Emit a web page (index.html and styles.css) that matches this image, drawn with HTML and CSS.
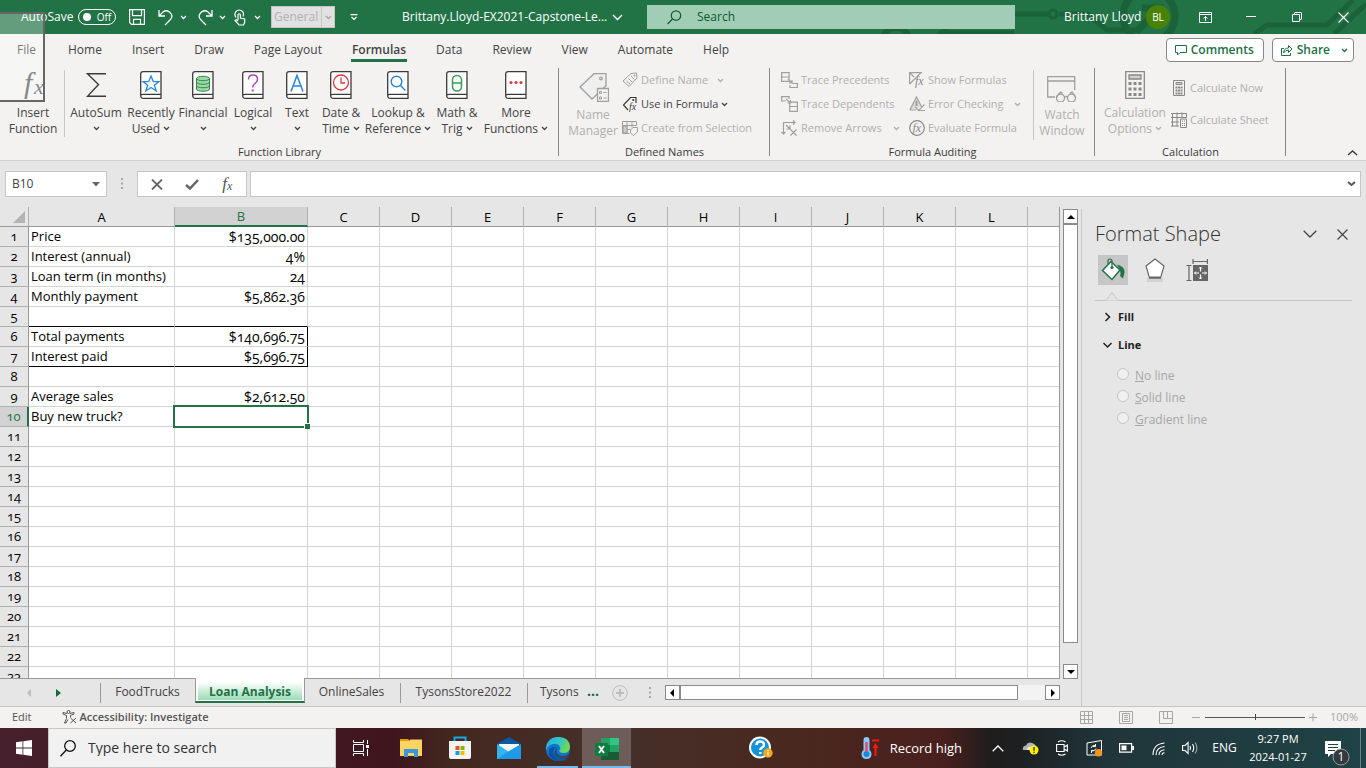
FILE: index.html
```html
<!DOCTYPE html>
<html lang="en">
<head>
<meta charset="utf-8">
<title>Workbook</title>
<link rel="stylesheet" href="styles.css">
</head>
<body>
<svg class="defs" aria-hidden="true">
  <symbol id="chev" viewBox="0 0 7 5"><path d="M1 1l2.500 2.500L6 1" fill="none" stroke="currentColor" stroke-width="1.300"/></symbol>
  <symbol id="book" viewBox="0 0 22 28"><path d="M.7 24V3.200Q.7.700 3.200.700H21V27.300H3.500Q.7 27.300.7 24.500Q.7 23.300 3 23.300H21" fill="#fff" stroke="#3b3a39" stroke-width="1.300"/></symbol>
</svg>

<header class="titlebar">
  <svg class="circuit" width="512" height="34" viewBox="0 0 512 34" fill="none" stroke="#1c6239" stroke-width="5" aria-hidden="true">
    <path d="M161 14h36M205 14h28l20 16h30"/><circle cx="199" cy="14" r="4" stroke-width="3"/>
    <circle cx="295" cy="16" r="26" stroke-width="7"/><path d="M282 32l22-22M288 8h18v18" stroke-width="7"/>
    <path d="M400 34l13-9h60l26-25M480 34l32-30M90 33h70"/><circle cx="42" cy="42" r="14" stroke-width="6"/><path d="M85 34q5-5 12 0"/>
  </svg>
  <div class="quick">
    <span class="autosave">AutoSave</span>
    <button class="toggle"><i></i>Off</button>
    <button class="q-save" aria-label="Save"><svg width="16" height="16" viewBox="0 0 16 16" fill="none" stroke="#fff" stroke-width="1.200"><path d="M.6.6h14.800v14.800H2.500L.6 13.500zM3.500.6v6h9v-6M4.500 15.400v-5h7v5"/></svg></button>
    <button class="q-undo" aria-label="Undo"><svg width="15" height="17" viewBox="0 0 15 17" fill="none" stroke="#fff" stroke-width="1.300"><path d="M1 1v6h6M1 7l4-4q3-2.500 6.500 0Q16 7 12 11l-5 5"/></svg><svg class="ch"><use href="#chev"/></svg></button>
    <button class="q-redo" aria-label="Redo"><svg width="15" height="17" viewBox="0 0 15 17" fill="none" stroke="#fff" stroke-width="1.300"><path d="M14 1v6H8M14 7l-4-4Q7 .5 3.500 3-1 7 3 11l5 5"/></svg><svg class="ch"><use href="#chev"/></svg></button>
    <button class="q-touch" aria-label="Touch mode"><svg width="12" height="17" viewBox="0 0 12 17" fill="none" stroke="#fff" stroke-width="1.200"><path d="M4 11V5.500q1.200-1.500 2.400 0V9l4.300 1v3.500L9.500 16H5l-4-4.500q1-1.500 3 .5M2 8.500Q0 6 1.600 3 5 -1 9 3q1 2 0 4.500"/></svg><svg class="ch"><use href="#chev"/></svg></button>
    <span class="combo"><select disabled aria-label="Number format"><option>General</option></select><span><svg class="ch"><use href="#chev"/></svg></span></span>
    <button class="q-more" aria-label="Customize toolbar"><svg width="8" height="7" viewBox="0 0 8 7" fill="none" stroke="#fff" stroke-width="1.200"><path d="M.5.700h7M1.500 3L4 5.500 6.500 3"/></svg></button>
  </div>
  <button class="doc">Brittany.Lloyd-EX2021-Capstone-Le...<svg width="11" height="7" viewBox="0 0 11 7" fill="none" stroke="#fff" stroke-width="1.400"><path d="M1 1l4.500 4.500L10 1"/></svg></button>
  <label class="find"><svg width="15" height="15" viewBox="0 0 15 15" fill="none" stroke="#0f5a30" stroke-width="1.200"><circle cx="9" cy="5.500" r="4.700"/><path d="M5.500 9L.6 14"/></svg><input type="text" placeholder="Search" aria-label="Search"></label>
  <div class="account">
    <span class="user">Brittany Lloyd</span><span class="avatar">BL</span>
    <button aria-label="Ribbon display"><svg width="13" height="11" viewBox="0 0 13 11" fill="none" stroke="#fff"><path d="M.5.5h12v10H.5zM.5 2.500h12M6.500 9V4.500M4.500 6.500l2-2 2 2"/></svg></button>
    <button aria-label="Minimize"><svg width="10" height="10" viewBox="0 0 10 10" stroke="#fff"><path d="M0 4.500h10"/></svg></button>
    <button aria-label="Restore"><svg width="10" height="10" viewBox="0 0 10 10" fill="none" stroke="#fff"><path d="M.5 2.500h7v7h-7zM2.500 2.500v-1.500q0-.5.5-.5h6q.5 0 .5.500v6q0 .5-.5.500H7.500"/></svg></button>
    <button aria-label="Close"><svg width="11" height="11" viewBox="0 0 11 11" stroke="#fff" stroke-width="1.200"><path d="M.5.5l10 10M10.500.5l-10 10"/></svg></button>
  </div>
</header>

<nav class="tabs">
  <button>File</button><button>Home</button><button>Insert</button><button>Draw</button><button>Page Layout</button><button class="on">Formulas</button><button>Data</button><button>Review</button><button>View</button><button>Automate</button><button>Help</button>
  <div class="share">
    <button><svg width="12" height="11" viewBox="0 0 12 11" fill="none" stroke="#1e7145"><path d="M.5.5h11v7H5l-2.500 2.500V7.500H.5z"/></svg>Comments</button>
    <button><svg width="12" height="12" viewBox="0 0 12 12" fill="none" stroke="#1e7145"><path d="M3 4.500H.5v7h9V9M2.500 9q.5-5 5-5V1.500L11 5 7.500 8.500V6Q4.500 6 2.500 9z"/></svg>Share<svg class="ch"><use href="#chev"/></svg></button>
  </div>
</nav>

<section class="ribbon">
  <div class="group lib">
    <div class="big-row">
      <button class="big first"><svg width="28" height="30" viewBox="0 0 28 30"><text x="5" y="23" class="fx-big">f</text><text x="15" y="24" class="fx-x">x</text></svg>Insert<br>Function</button>
      <button class="big"><svg width="20" height="30" viewBox="0 0 20 30" fill="none" stroke="#3b3a39" stroke-width="1.400"><path d="M20 3.700H1.500L12.500 14.500 1.500 26.300H20"/></svg>AutoSum<br><svg class="ch"><use href="#chev"/></svg></button>
      <button class="big"><svg width="22" height="30" viewBox="0 0 22 30" fill="none"><use href="#book" y="1" width="22" height="28"/><path d="M11 6l2.300 5.600H19l-4.600 3.600 1.800 5.800-5.200-3.500L5.800 21l1.800-5.800L3 11.600h5.700z" stroke="#2b88d8" stroke-width="1.300"/></svg>Recently<br>Used <svg class="ch"><use href="#chev"/></svg></button>
      <button class="big"><svg width="22" height="30" viewBox="0 0 22 30" fill="#9fd8a8" stroke="#2f8a45"><use href="#book" y="1" width="22" height="28"/><path d="M4.500 8.500v10.500c0 3 13 3 13 0V8.500"/><ellipse cx="11" cy="8.500" rx="6.500" ry="2.200"/><path d="M4.500 12c0 3 13 3 13 0M4.500 15.500c0 3 13 3 13 0" fill="none"/></svg>Financial<br><svg class="ch"><use href="#chev"/></svg></button>
      <button class="big"><svg width="22" height="30" viewBox="0 0 22 30" fill="none" stroke="#a846b8" stroke-width="1.500"><use href="#book" y="1" width="22" height="28"/><path d="M6.500 9.500q0-4.500 4.500-4.500t4.500 4.500q0 2-2.500 4t-2.300 4"/><path d="M9.700 20.500h2" stroke-width="2"/></svg>Logical<br><svg class="ch"><use href="#chev"/></svg></button>
      <button class="big"><svg width="22" height="30" viewBox="0 0 22 30" fill="none" stroke="#2b88d8" stroke-width="1.600"><use href="#book" y="1" width="22" height="28"/><path d="M5 21.500L11 5.500l6 16M7.200 16h7.600"/></svg>Text<br><svg class="ch"><use href="#chev"/></svg></button>
      <button class="big"><svg width="22" height="30" viewBox="0 0 22 30" fill="none" stroke="#e8373b" stroke-width="1.300"><use href="#book" y="1" width="22" height="28"/><circle cx="11" cy="12.500" r="7.500"/><path d="M11 7.500v5.500h4"/></svg>Date &amp;<br>Time <svg class="ch"><use href="#chev"/></svg></button>
      <button class="big"><svg width="22" height="30" viewBox="0 0 22 30" fill="none" stroke="#2b88d8" stroke-width="1.500"><use href="#book" y="1" width="22" height="28"/><circle cx="9.500" cy="11.500" r="5.300"/><path d="M13.300 15.300l5 5.200"/></svg>Lookup &amp;<br>Reference <svg class="ch"><use href="#chev"/></svg></button>
      <button class="big"><svg width="22" height="30" viewBox="0 0 22 30" fill="none" stroke="#33a04f" stroke-width="1.500"><use href="#book" y="1" width="22" height="28"/><rect x="6.500" y="5.500" width="9" height="15.500" rx="4.500"/><path d="M6.500 13h9"/></svg>Math &amp;<br>Trig <svg class="ch"><use href="#chev"/></svg></button>
      <button class="big"><svg width="22" height="30" viewBox="0 0 22 30" fill="#e8373b"><use href="#book" y="1" width="22" height="28"/><circle cx="6" cy="12.500" r="1.600"/><circle cx="11" cy="12.500" r="1.600"/><circle cx="16" cy="12.500" r="1.600"/></svg>More<br>Functions <svg class="ch"><use href="#chev"/></svg></button>
    </div>
    <h2>Function Library</h2>
  </div>

  <div class="group names">
    <div class="cols">
      <button class="big off" disabled><svg width="32" height="30" viewBox="0 0 32 30" fill="none" stroke="#a19f9d" stroke-width="1.300"><path d="M17 1.700h12v12L15 27 3 15z" fill="#efefef"/><circle cx="24" cy="6.500" r="1.300"/><path d="M20.500 16.500h11v13h-11z" fill="#f3f2f1"/><path d="M22.500 19.500h2v2h-2zM22.500 25h2v2h-2zM26.500 20.500h3M26.500 26h3" stroke-width="1"/></svg>Name<br>Manager</button>
      <div class="stack">
        <button class="small off" disabled><svg width="16" height="16" viewBox="0 0 16 16" fill="none" stroke="#a19f9d"><path d="M9 1.500l5.500-.5.500 5-8 8.500-6-5.500zM4.500 9l4 3.500M6.500 6.500l4 4M9 4l3.500 3.500"/><circle cx="12.500" cy="3.500" r=".6"/></svg><span>Define Name</span><svg class="ch"><use href="#chev"/></svg></button>
        <button class="small"><svg width="16" height="16" viewBox="0 0 16 16" fill="none" stroke="#3b3a39" stroke-width="1.200"><path d="M6 14L1.500 9 8.500 1.500H14V7"/><circle cx="11.300" cy="4" r=".5"/><text x="7" y="14" class="fx-s">fx</text></svg><span>Use in Formula</span><svg class="ch tight"><use href="#chev"/></svg></button>
        <button class="small off" disabled><svg width="16" height="16" viewBox="0 0 16 16" fill="none" stroke="#a19f9d"><path d="M.5 1.500h14v4M.5 1.500v12h7M.5 5.500h14M.5 9.500h8M5 1.500v12M10 1.500v6"/><path d="M1 6h4v7H1z" fill="#cfcdcb"/><path d="M11 7.500h4.500V12l-4 3.500L8.500 13V10z" fill="#f3f2f1"/></svg><span>Create from Selection</span></button>
      </div>
    </div>
    <h2>Defined Names</h2>
  </div>

  <div class="group audit">
    <div class="cols">
      <div class="stack">
        <button class="small off" disabled><svg width="17" height="16" viewBox="0 0 17 16" fill="none" stroke="#a19f9d" stroke-width="1.200"><path d="M.6.600h7.500v8.800H.6zM.6 5h7.500M7 7l4 4M11 8v3H8M11.500 11.500h4.900v4H9v-2.500"/></svg><span>Trace Precedents</span></button>
        <button class="small off" disabled><svg width="17" height="16" viewBox="0 0 17 16" fill="none" stroke="#a19f9d" stroke-width="1.200"><path d="M.6 5V.600h7.500V3M.6 5h4M5 3l4.500 4M9.500 4v3h-3M8.700 9.500V6.200h7.700v9.200H8.700zM8.700 10.500h7.700"/></svg><span>Trace Dependents</span></button>
        <button class="small off" disabled><svg width="17" height="16" viewBox="0 0 17 16" fill="none" stroke="#a19f9d" stroke-width="1.200"><path d="M2.500 14V2.500H14M.5 12l2 2 2-2M12 .5l2 2-2 2M5 5l4 4M9 5.500V9H5.500M9.500 9.500l6 6M15.500 9.500l-6 6"/></svg><span>Remove Arrows</span><svg class="ch far"><use href="#chev"/></svg></button>
      </div>
      <div class="stack two">
        <button class="small off" disabled><svg width="16" height="16" viewBox="0 0 16 16" fill="none" stroke="#a19f9d" stroke-width="1.200"><path d="M13 .600H.6V12M.6 12L12 .6M.6.6L5 5"/><text x="6" y="13" class="fx-s fx-l">fx</text></svg><span>Show Formulas</span></button>
        <button class="small off" disabled><svg width="16" height="16" viewBox="0 0 16 16" fill="none" stroke="#a19f9d" stroke-width="1.200"><path d="M.8 14L7.500 1l5 9.500M.8 14H7" fill="#dddbd9"/><path d="M7.500 5v5" stroke-width="2"/><path d="M6 11l3.500 3.500 6-6M9 14.500h7"/></svg><span>Error Checking</span><svg class="ch far"><use href="#chev"/></svg></button>
        <button class="small off" disabled><svg width="16" height="16" viewBox="0 0 16 16" fill="none" stroke="#8a8886" stroke-width="1.200"><circle cx="8" cy="8" r="7.300"/><text x="3.500" y="11.500" class="fx-s fx-l">fx</text></svg><span>Evaluate Formula</span></button>
      </div>
      <button class="big off watch" disabled><svg width="30" height="30" viewBox="0 0 30 30" fill="none" stroke="#a19f9d" stroke-width="1.300"><path d="M8 25H.700V4.700h27V18M.7 9h27"/><circle cx="13.500" cy="26" r="4"/><circle cx="24.500" cy="26" r="4"/><path d="M17.500 25q1.500-1 3 0M9.500 25l4-5 2 1M28.500 25l-3.500-5-2 1"/></svg>Watch<br>Window</button>
    </div>
    <h2>Formula Auditing</h2>
  </div>

  <div class="group calc">
    <div class="cols">
      <button class="big off" disabled><svg width="20" height="30" viewBox="0 0 20 30" fill="none" stroke="#8a8886" stroke-width="1.300"><path d="M.7 1.700h18.600v26.600H.7z"/><path d="M4 5h12v4H4z" fill="#d2d0ce"/><path d="M3.500 13.500h14M3.500 19h14M3.500 24.500h14" stroke-width="3" stroke-dasharray="3 2"/></svg>Calculation<br>Options <svg class="ch"><use href="#chev"/></svg></button>
      <div class="stack">
        <button class="small off" disabled><svg width="16" height="16" viewBox="0 0 16 16" fill="none" stroke="#8a8886"><path d="M2.500.5h11v15h-11z"/><path d="M5 2.500h6v2H5z" fill="#d2d0ce"/><path d="M4.500 7.500h7M4.500 10.500h7M4.500 13.500h7" stroke-width="2" stroke-dasharray="2 .5"/></svg><span>Calculate Now</span></button>
        <button class="small off" disabled><svg width="16" height="16" viewBox="0 0 16 16" fill="none" stroke="#8a8886"><path d="M0 1.500h15.500v4M1.500 1.500v13M6 .5v14M11 .5v5M0 5.500h15.500M0 10h8M0 14h8"/><path d="M9.500 7h6v8.500h-6z" fill="#f3f2f1"/><path d="M11 9h3M11 11.500h3M11 13.500h3" stroke-dasharray="1 1"/></svg><span>Calculate Sheet</span></button>
      </div>
    </div>
    <h2>Calculation</h2>
  </div>
  <button class="collapse" aria-label="Collapse ribbon"><svg width="11" height="6" viewBox="0 0 11 6" fill="none" stroke="#3b3a39" stroke-width="1.400"><path d="M1 5l4.500-4L10 5"/></svg></button>
</section>

<section class="formula">
  <div class="namebox"><input type="text" value="B10" aria-label="Name box"><svg width="8" height="5" viewBox="0 0 8 5"><path d="M0 0h8L4 4.500z" fill="#666"/></svg></div>
  <svg class="grip" width="3" height="12" viewBox="0 0 3 12" fill="#a6a6a6"><path d="M0 0h2v2H0zM0 4.500h2v2H0zM0 9h2v2H0z"/></svg>
  <div class="fx-box">
    <button aria-label="Cancel"><svg width="12" height="11" viewBox="0 0 12 11" fill="none" stroke="#666" stroke-width="1.800"><path d="M1 .5l10 10M11 .5L1 10.500"/></svg></button>
    <button aria-label="Enter"><svg width="14" height="11" viewBox="0 0 14 11" fill="none" stroke="#666" stroke-width="2.500"><path d="M1 6l4 3.500L13 1"/></svg></button>
    <button class="fx-btn" aria-label="Insert function">f<sub>x</sub></button>
  </div>
  <div class="entry"><input type="text" aria-label="Formula bar"><svg width="9" height="6" viewBox="0 0 9 6" fill="none" stroke="#555" stroke-width="2"><path d="M1 1l3.500 3L8 1"/></svg></div>
</section>

<main class="main">
  <div class="book">
    <div class="sheet-row">
      <div class="sheet">
        <table>
          <colgroup><col class="c-head"><col class="c-a"><col class="c-b"></colgroup>
          <thead></thead>
          <tbody></tbody>
        </table>
      </div>
      <div class="vscroll"><button aria-label="Scroll up"><svg width="8" height="4" viewBox="0 0 8 4"><path d="M0 4l4-4 4 4z"/></svg></button><div class="thumb"></div><button aria-label="Scroll down"><svg width="8" height="4" viewBox="0 0 8 4"><path d="M0 0l4 4 4-4z"/></svg></button></div>
    </div>
    <div class="sheetbar">
      <div class="arrows"><svg width="4" height="8" viewBox="0 0 4 8" fill="#bdbdbd"><path d="M4 0v8L0 4z"/></svg><svg width="5" height="8" viewBox="0 0 5 8" fill="#0f6b3a"><path d="M0 0v8l5-4z"/></svg></div>
      <button class="st w1">FoodTrucks</button><button class="st active"><span>Loan Analysis</span></button><button class="st w2">OnlineSales</button><button class="st w3">TysonsStore2022</button><button class="st w4">Tysons</button>
      <b class="dots">...</b>
      <button class="plus" aria-label="New sheet"><svg width="16" height="16" viewBox="0 0 16 16" fill="none" stroke="#bdbdbd"><circle cx="8" cy="8" r="7.300"/><path d="M8 4v8M4 8h8" stroke-width="2"/></svg></button>
      <svg class="grip2" width="3" height="12" viewBox="0 0 3 12" fill="#a6a6a6"><path d="M0 0h2v2H0zM0 4.500h2v2H0zM0 9h2v2H0z"/></svg>
      <div class="hscroll"><button aria-label="Scroll left"><svg width="4" height="8" viewBox="0 0 4 8"><path d="M4 0v8L0 4z"/></svg></button><div class="thumb"></div><button aria-label="Scroll right"><svg width="4" height="8" viewBox="0 0 4 8"><path d="M0 0v8l4-4z"/></svg></button></div>
    </div>
  </div>
  <aside class="pane">
    <div class="pane-head"><h1>Format Shape</h1><button aria-label="Options"><svg width="14" height="8" viewBox="0 0 14 8" fill="none" stroke="#444" stroke-width="1.300"><path d="M.7.700L7 7 13.300.700"/></svg></button><button aria-label="Close pane"><svg width="11" height="11" viewBox="0 0 11 11" stroke="#444" stroke-width="1.200"><path d="M.5.5l10 10M10.500.5l-10 10"/></svg></button></div>
    <div class="pane-tabs">
      <button class="sel" aria-label="Fill and line"><svg width="24" height="24" viewBox="0 0 24 24" fill="none"><path d="M10 3.500L19 12l-8 9.500L1.500 12.500z" fill="#fff" stroke="#217346" stroke-width="1.500"/><path d="M7 6V3q0-2 2-2t2 2v6" stroke="#217346" stroke-width="1.200"/><circle cx="11" cy="9.500" r="1.600" fill="#217346"/><path d="M16 6.500q8 2 7.500 8l-1.500 6-3-2.500q2-4-3-11.500z" fill="#217346"/></svg></button>
      <button aria-label="Effects"><svg width="22" height="24" viewBox="0 0 22 24"><path d="M3 20h16v4H3z" fill="#d2d2d2"/><path d="M11 1l9 7-3.500 12h-11L2 8z" fill="#fff" stroke="#666" stroke-width="1.200"/><path d="M5 19.500h12" stroke="#666" stroke-width="2"/></svg></button>
      <button aria-label="Size and properties"><svg width="22" height="22" viewBox="0 0 22 22" fill="none" stroke="#666" stroke-width="1.200"><path d="M3 6.500v15M.5 6.500h5M.5 21.500h5M7 2.500h14M7 0v5M21.400 0v5"/><path d="M7 6h15v16H7z" fill="#666" stroke="none"/><path d="M14.500 8v12M8.500 14h12" stroke="#fff" stroke-dasharray="4.500 3"/><path d="M13 9.500L14.500 8 16 9.500M13 18.500l1.500 1.500 1.500-1.500M10 12.500L8.500 14l1.500 1.500M19 12.500l1.500 1.500-1.500 1.500" stroke="#fff" stroke-width="1"/></svg></button>
    </div>
    <svg class="notch" width="14" height="9" viewBox="0 0 14 9" fill="#e6e6e6" stroke="#c6c6c6"><path d="M0 8.500h1L7 .700l6 7.800h1"/></svg>
    <div class="rule"></div>
    <button class="sec"><svg width="9" height="10" viewBox="0 0 9 10" fill="none" stroke="#222" stroke-width="1.500"><path d="M2.500 1l4 4-4 4"/></svg>Fill</button>
    <button class="sec"><svg width="9" height="10" viewBox="0 0 9 10" fill="none" stroke="#222" stroke-width="1.500"><path d="M.5 3l4 4 4-4"/></svg>Line</button>
    <div class="radios">
      <label><input type="radio" name="line" disabled><span><u>N</u>o line</span></label>
      <label><input type="radio" name="line" disabled><span><u>S</u>olid line</span></label>
      <label><input type="radio" name="line" disabled><span><u>G</u>radient line</span></label>
    </div>
  </aside>
</main>

<footer class="status">
  <span>Edit</span>
  <button class="acc"><svg width="15" height="14" viewBox="0 0 15 14" fill="none" stroke="#555"><circle cx="6.500" cy="2" r="1.500"/><path d="M5 3.500L1 2.500v1.500l3.500 1.500v3L2.500 13h1.500L6 9.500M8 3.500l4-1v1.500L8.500 5.500v2M8.500 8l5.500 5M14 8l-5.500 5"/></svg>Accessibility: Investigate</button>
  <div class="views">
    <button aria-label="Normal"><svg width="13" height="13" viewBox="0 0 13 13" fill="none" stroke="#a6a6a6"><path d="M.5.5h12v12H.5zM4.500.5v12M8.500.5v12M.5 4.500h12M.5 8.500h12"/></svg></button>
    <button aria-label="Page layout"><svg width="14" height="13" viewBox="0 0 14 13" fill="none" stroke="#a6a6a6"><path d="M.5.5h13v12H.5zM3.500 2.500h7v8h-7zM5 4.500h4M5 6.500h4M5 8.500h4"/></svg></button>
    <button aria-label="Page break"><svg width="14" height="13" viewBox="0 0 14 13" fill="none" stroke="#a6a6a6"><path d="M.5.5h13v12H.5zM4.500.5v7h4v-7M8.500 7.500h5"/></svg></button>
  </div>
  <div class="zoom"><button aria-label="Zoom out"><svg width="9" height="9" viewBox="0 0 9 9" stroke="#a6a6a6"><path d="M0 4.500h8"/></svg></button><input type="range" min="0" max="100" value="50" aria-label="Zoom"><button aria-label="Zoom in"><svg width="9" height="9" viewBox="0 0 9 9" stroke="#a6a6a6"><path d="M0 4.500h8M4 .5v8"/></svg></button><span>100%</span></div>
</footer>

<div class="taskbar">
  <button class="start" aria-label="Start"><svg width="16" height="16" viewBox="0 0 16 16" fill="#fff"><path d="M0 2.200l6.500-.9v6.300H0zM7.300 1.200L16 0v7.600H7.300zM0 8.400h6.500v6.300L0 13.800zM7.300 8.400H16V16l-8.700-1.200z"/></svg></button>
  <label class="tsearch"><svg width="16" height="17" viewBox="0 0 16 17" fill="none" stroke="#111" stroke-width="1.300"><circle cx="10" cy="6" r="5.300"/><path d="M6.300 10L.5 16.300"/></svg><input type="text" placeholder="Type here to search" aria-label="Type here to search"></label>
  <div class="apps">
    <button aria-label="Task view"><svg width="17" height="16" viewBox="0 0 17 16" fill="none" stroke="#fff"><path d="M.5 0v2.500h10V0M.5 16v-2.500h10V16M.5 4.500h10v7H.5zM14.500 0v4M14.500 9v7"/><path d="M13 5h3v3h-3z" fill="#fff" stroke="none"/></svg></button>
    <button aria-label="File Explorer"><svg width="22" height="20" viewBox="0 0 22 20"><path d="M0 1h8l2 2H0z" fill="#e0a100"/><path d="M0 3h9l1.500-1.500H22V18H0z" fill="#fcd462"/><path d="M4 18v-7h14v8h-4v-4H8v4H4z" fill="#3a96dd"/></svg></button>
    <button aria-label="Store"><svg width="24" height="24" viewBox="0 0 24 24"><path d="M6.500 6V1.500h11V6" fill="none" stroke="#1aa7e0" stroke-width="2"/><path d="M1 5h22v16q0 2-2 2H3q-2 0-2-2z" fill="#f4f4f4"/><path d="M7.500 10h4v4h-4z" fill="#f25022"/><path d="M12.500 10h4v4h-4z" fill="#7fba00"/><path d="M7.500 15h4v4h-4z" fill="#00a4ef"/><path d="M12.500 15h4v4h-4z" fill="#ffb900"/></svg></button>
    <button aria-label="Mail"><svg width="24" height="24" viewBox="0 0 24 24"><path d="M0 8l12-7 12 7v6H0z" fill="#0a5aa5"/><path d="M2 8h20v10H2z" fill="#f5f5f5"/><path d="M0 8l12 8v7H0z" fill="#32b5ef"/><path d="M24 8L12 15 0 23h24z" fill="#1d9be8"/></svg></button>
    <button class="run" aria-label="Edge"><svg width="24" height="24" viewBox="0 0 24 24"><defs><linearGradient id="eg" x1="0" y1="0" x2="1" y2=".4"><stop offset="0" stop-color="#22b1e8"/><stop offset=".6" stop-color="#35c6c5"/><stop offset="1" stop-color="#6edc50"/></linearGradient></defs><circle cx="12" cy="12" r="12" fill="#0f75cf"/><path d="M0 11Q1 1 11 0q12-.5 13 9.500 0 6-6 6.500-4 .2-5-2 2-2 1-4Q12 6 7 7 2 8 0 13z" fill="url(#eg)"/><path d="M10.500 10q-5 3-2.500 9 3 5 9 4.500-11 2-14-6Q1.500 9 10.500 10z" fill="#0a4fa0"/><path d="M11.500 11q-2.500 4 1.500 7 5 2.500 10-1l1 4-3 3-5 0q-7-2-7.500-7Q9 12 11.500 11z" fill="#47302a" opacity=".7"/><path d="M9.500 13q0 8 8 9 3 0 5-4-1 5-7 6-8-1-8-7z" fill="#0c59a4"/></svg></button>
    <button class="run cur" aria-label="Excel"><svg width="26" height="22" viewBox="0 0 26 22"><path d="M7 0h9v7H7z" fill="#21a366"/><path d="M16 0h9v7h-9z" fill="#33c481"/><path d="M7 7h9v7H7z" fill="#107c41"/><path d="M16 7h9v7h-9z" fill="#21a366"/><path d="M7 14h18v8H7z" fill="#185c37"/><path d="M1 5h13v13H1z" fill="#107c41"/><path d="M5 8l5 7M10 8l-5 7" stroke="#fff" stroke-width="1.800"/></svg></button>
  </div>
  <button class="helpb" aria-label="Help"><svg width="24" height="24" viewBox="0 0 24 24"><circle cx="11" cy="11.500" r="10" fill="#1593d6" stroke="#fff" stroke-width="2"/><path d="M7.500 9q0-3.500 3.700-3.500T15 8.700q0 1.800-2 2.800-1.700 1-1.700 2.500M11.300 16v2" fill="none" stroke="#fff" stroke-width="2.500"/><circle cx="19" cy="17" r="4.700" fill="#f5a81c"/><path d="M19 14v1.300M19 16.200v3.500" stroke="#fff" stroke-width="1.300"/></svg></button>
  <button class="weather"><svg width="18" height="22" viewBox="0 0 18 22"><path d="M2.500 3q0-3 3-3t3 3v10q2 1.500 2 4 0 5-5 5t-5-5q0-2.500 2-4z" fill="#8cc8f5"/><circle cx="5.500" cy="17" r="3" fill="#1b87dd"/><path d="M5.500 5v10" stroke="#dc4b6c" stroke-width="2.500"/><path d="M11 3.500h7M14.500 19V8" stroke="#f5190f" stroke-width="2.200"/><path d="M11.500 11l3-5 3 5z" fill="#f5190f"/></svg>Record high</button>
  <div class="tray">
    <button aria-label="Hidden icons"><svg width="12" height="7" viewBox="0 0 12 7" fill="none" stroke="#fff" stroke-width="1.300"><path d="M.7 6.300L6 1l5.300 5.300"/></svg></button>
    <button aria-label="OneDrive"><svg width="17" height="14" viewBox="0 0 17 14"><path d="M1 9q-1-4 3-4.500Q6 0 10 2q4 1 4 5l-1 2H1z" fill="#b5b5b5"/><path d="M5 9q1-4 5-3l3 3z" fill="#f2f2f2"/><circle cx="12" cy="9" r="4.500" fill="#fff100"/><path d="M12 6v3.800M12 10.700v1.300" stroke="#222" stroke-width="1.300"/></svg></button>
    <button aria-label="Meet now"><svg width="12" height="16" viewBox="0 0 12 16" fill="none" stroke="#fff" stroke-width="1.100"><path d="M.6 4.500h7.500v7H.6zM8.100 7L11.400 5v6L8.100 9M2 2q3.500-2.500 7.500 0M2 14q3.500 2.500 7.500 0"/></svg></button>
    <button aria-label="Updates"><svg width="17" height="17" viewBox="0 0 17 17" fill="none" stroke="#fff"><path d="M1 3l14.500-2.500v14.500H1zM5 8q1-3 4-2.500M9.500 4v2.500H7M10 8.500q-1 2.500-4 2.500M5.500 13v-2.500H8"/><circle cx="12.500" cy="12.800" r="3.700" fill="#f7941d" stroke="none"/></svg></button>
    <button aria-label="Battery"><svg width="15" height="10" viewBox="0 0 15 10" fill="none" stroke="#fff" stroke-width="1.200"><path d="M.6.600h12v8.500H.6zM13 3.500h1.400v3H13z"/><path d="M2.500 2.500h5v4.700h-5z" fill="#fff" stroke="none"/></svg></button>
    <button aria-label="Network"><svg width="13" height="13" viewBox="0 0 13 13" fill="none" stroke="#fff" stroke-width="1.100"><path d="M1 13Q1 2 12.500 1M4 13q0-7.500 8.500-8.500M7 13q0-4.500 5.500-5.200M10 13q0-2 2.500-2.200"/></svg></button>
    <button aria-label="Volume"><svg width="16" height="14" viewBox="0 0 16 14" fill="none" stroke="#fff" stroke-width="1.100"><path d="M.6 4.500h2.500l3-3v11l-3-3H.6zM8 5q1 2 0 4M10.500 3q2.500 4 0 8"/><path d="M13 1.500q4 5.500 0 11" stroke="#9aa"/></svg></button>
    <span class="lang">ENG</span>
    <span class="clock">9:27 PM<br>2024-01-27</span>
    <button class="note" aria-label="Notifications"><svg width="26" height="26" viewBox="0 0 26 26"><path d="M1 1h16v13H7l-3 3v-3H1z" fill="#fff"/><path d="M4 4.500h10M4 7.500h10M4 10.500h7" stroke="#234045" stroke-width="1.200"/><circle cx="17" cy="17" r="8" fill="#333a3d" stroke="#9a9a9a"/><text x="17" y="21" class="count">1</text></svg></button>
  </div>
</div>
<div class="hover-box"></div>
<script src="app.js"></script>
</body>
</html>
```
FILE: styles.css
```css
* { box-sizing: border-box; }
body { margin: 0; height: 100vh; display: flex; flex-direction: column; overflow: hidden; background: #e6e6e6; color: #444; font: 12px/16px "Open Sans", "Noto Sans", sans-serif; }
button, input, select { font: inherit; color: inherit; background: none; border: 0; padding: 0; margin: 0; }
button { display: flex; align-items: center; justify-content: center; white-space: nowrap; }
h1, h2 { margin: 0; font-weight: 400; }
.defs { position: absolute; width: 0; height: 0; }
svg { flex: none; }
.ch { width: 7px; height: 5px; }

.titlebar { position: relative; flex: none; height: 34px; background: #217346; color: #fff; display: grid; grid-template-columns: 402px 245px 1fr 351px; align-items: center; }
.circuit { position: absolute; right: 0; top: 0; }
.titlebar > * { z-index: 1; }
.titlebar > .circuit { z-index: 0; }
.quick { display: flex; align-items: center; padding-left: 21px; }
.autosave { width: 57px; font-size: 12px; }
.toggle { width: 38px; height: 16px; border: 1px solid #fff; border-radius: 8px; font-size: 10px; gap: 6px; }
.toggle i { width: 8px; height: 8px; border-radius: 50%; background: #fff; }
.q-save { margin-left: 13px; }
.q-undo { margin-left: 13px; gap: 7px; }
.q-redo { margin-left: 11px; gap: 6px; }
.q-touch { margin-left: 8px; gap: 8px; }
.combo { display: flex; margin-left: 10px; width: 64px; height: 22px; background: #e1e1e1; border: 1px solid #c6c6c6; color: #a6a6a6; }
.combo select { appearance: none; width: 49px; padding-left: 2px; opacity: 1; color: #b1b1b1; }
.combo span { flex: 1; border-left: 1px solid #c6c6c6; display: flex; align-items: center; justify-content: center; }
.q-more { margin-left: 15px; }
.doc { justify-content: flex-start; gap: 5px; font-size: 12px; }
.find { display: flex; align-items: center; gap: 15px; height: 24px; background: #a0cdb4; padding-left: 20px; color: #0f5a30; }
.find input { flex: 1; min-width: 0; }
.find input::placeholder { color: #0f5a30; opacity: 1; }
.account { display: flex; align-items: center; padding-left: 49px; }
.user { width: 82px; white-space: nowrap; }
.avatar { width: 24px; height: 24px; border-radius: 50%; background: #498205; text-align: center; line-height: 24px; font-size: 10px; margin-right: 12px; }
.account button { width: 46px; height: 30px; }

.tabs { flex: none; display: flex; height: 32px; background: #f3f2f1; padding-left: 2px; font-size: 12px; }
.tabs > button { position: relative; padding: 0 15px; }
.tabs > button:first-child { margin-right: 2px; }
.tabs .on { font-weight: 600; }
.tabs .on::after { content: ""; position: absolute; left: 14px; right: 14px; bottom: 4px; height: 3px; background: #217346; }
.share { margin-left: auto; display: flex; gap: 8px; align-items: center; padding-right: 12px; }
.share button { height: 24px; padding: 0 9px 0 8px; gap: 4px; background: #fff; border: 1px solid #8a8886; border-radius: 4px; color: #1e7145; font-weight: 600; }
.share .ch { margin-left: 7px; margin-right: -4px; }

.ribbon { flex: none; display: flex; height: 95px; background: #f3f2f1; border-bottom: 1px solid #d2d0ce; }
.group { position: relative; display: flex; flex-direction: column; justify-content: space-between; padding: 4px 0 0; }
.group::after { content: ""; position: absolute; right: 0; top: 2px; bottom: 4px; width: 1px; background: #8a8886; }
.group h2 { font-size: 11px; line-height: 16px; text-align: center; color: #3b3a39; }
.lib { width: 559px; }
.names { width: 211px; }
.audit { width: 325px; }
.calc { width: 191px; }
.big-row { display: grid; grid-template-columns: 65px 62px 48px 56px 44px 44px 44px 70px 48px 70px; }
.big { display: block; text-align: center; line-height: 16px; }
.big > svg:first-child { display: block; margin: 0 auto 5px; }
.big .ch { vertical-align: 2px; }
.big.first { border-right: 1px solid #c8c6c4; padding-left: 2px; }
.off { color: #b1afad; }
.fx-big { font: italic 30px "Liberation Serif", serif; fill: #555; }
.fx-x { font: italic 22px "Liberation Serif", serif; fill: #555; }
.fx-s { font: italic 10px "Liberation Serif", serif; fill: #3b3a39; stroke: none; }
.fx-l { font-size: 12px; fill: #8a8886; }
.cols { display: flex; }
.names .big { width: 68px; }
.stack { display: flex; flex-direction: column; margin-top: -2px; }
.small { height: 24px; justify-content: flex-start; gap: 3px; font-size: 11px; }
.small .ch { margin-left: 6px; }
.small .tight { margin-left: 0; }
.small .far { margin-left: 8px; }
.names .stack { margin-left: -5px; }
.audit .stack { margin-left: 11px; width: 120px; }
.audit .two { margin-left: 8px; width: 124px; }
.watch { width: 57px; border-left: 1px solid #c8c6c4; }
.calc .big { width: 80px; }
.calc .small { height: 32px; gap: 3px; }
.calc .stack { margin-top: 2px; margin-left: -4px; }
.collapse { margin-left: auto; align-self: flex-end; padding: 0 8px 4px; }

.formula { flex: none; display: flex; align-items: center; height: 46px; padding: 0 5px; }
.namebox, .fx-box, .entry { height: 26px; background: #fff; border: 1px solid #c6c6c6; display: flex; align-items: center; }
.namebox { width: 102px; padding: 0 6px; }
.namebox input { flex: 1; min-width: 0; }
.grip { margin: 0 13px 0 14px; }
.fx-box { width: 110px; padding: 0 1px; }
.fx-box button { flex: 1; height: 24px; }
.fx-btn { font: italic 17px/20px "Liberation Serif", serif; color: #555; }
.fx-btn sub { font-size: 12px; line-height: 12px; margin-top: 4px; }
.entry { flex: 1; margin-left: 3px; padding-right: 4px; }
.entry input { flex: 1; }

.main { flex: 1; min-height: 0; display: flex; }
.book { flex: 1; min-width: 0; display: flex; flex-direction: column; }
.sheet-row { flex: 1; min-height: 0; display: flex; }
.sheet { flex: 1; min-width: 0; overflow: hidden; border-right: 1px solid #999; border-bottom: 1px solid #999; }
table { table-layout: fixed; width: 1100px; border-collapse: separate; border-spacing: 0; color: #000; }
.c-head { width: 29px; }
.c-a { width: 146px; }
.c-b { width: 133px; }
th, td { height: 20px; padding: 0 2px; font-weight: 400; line-height: 19px; border-right: 1px solid #d4d4d4; border-bottom: 1px solid #d4d4d4; white-space: nowrap; }
td { background: #fff; font-size: 13px; text-align: left; }
th { background: #e6e6e6; border-bottom-color: #b0b0b0; border-right-color: #999; padding: 0; font-size: 13px; font-variant-numeric: oldstyle-nums; }
thead th { line-height: 18px; border-right-color: #b0b0b0; border-bottom-color: #999; }
thead .sel { background: #d2d2d2; color: #217346; border-bottom: 2px solid #217346; }
tbody .sel { background: #d2d2d2; color: #217346; border-right: 2px solid #217346; }
.corner svg { display: block; margin: 0 3px 0 auto; }
td.num { text-align: right; font-size: 14px; font-variant-numeric: oldstyle-nums; }
.bb { border-bottom-color: #000; }
.br { border-right-color: #000; }
.cell-active { position: relative; }
.cell-active::before { content: ""; position: absolute; left: -2px; top: -2px; right: -2px; bottom: -2px; border: 2px solid #217346; }
.cell-active::after { content: ""; position: absolute; right: -3px; bottom: -3px; width: 5px; height: 5px; background: #217346; border: solid #fff; border-width: 1px 0 0 1px; }
.vscroll { width: 21px; display: flex; flex-direction: column; padding: 2px 3px 0; }
.vscroll button, .hscroll button { flex: none; width: 15px; height: 15px; background: #fff; border: 1px solid #8a8a8a; }
.vscroll .thumb { flex: 1; margin-bottom: 21px; background: #fff; border: 1px solid #8a8a8a; }

.sheetbar { flex: none; height: 27px; display: flex; padding-right: 21px; }
.arrows { width: 100px; display: flex; gap: 25px; padding-left: 27px; align-items: center; }
.st { position: relative; height: 26px; }
.st::before { content: ""; position: absolute; left: 0; top: 4px; height: 20px; width: 1px; background: #999; }
.w1 { width: 95px; }
.w2 { width: 95px; padding-right: 2px; }
.w3 { width: 127px; }
.w4 { width: 60px; padding-left: 13px; justify-content: flex-start; }
.w2::before { display: none; }
.st.active { width: 110px; height: 25px; margin-top: -1px; background: #fff; border: solid #999; border-width: 0 1px; border-bottom: 2px solid #217346; padding: 0 2px 1px; color: #217346; font-weight: 700; }
.st.active::before { display: none; }
.st.active span { flex: 1; height: 18px; margin-top: 4px; line-height: 19px; background: linear-gradient(#fff, #9bdbb4); }
.dots { color: #0f6b3a; line-height: 24px; font-size: 14px; }
.plus { margin: 0 28px 0 13px; }
.grip2 { align-self: center; margin-left: -7px; }
.hscroll { flex: 1; margin: 6px 0 0 13px; height: 15px; display: flex; background: #f3f3f3; }
.hscroll .thumb { flex: 1; margin-right: 27px; background: #fff; border: 1px solid #8a8a8a; }

.pane { position: relative; flex: none; width: 285px; margin-top: 2px; border-left: 1px solid #c6c6c6; padding: 11px 14px 0 13px; }
.pane-head { display: flex; align-items: center; height: 28px; }
.pane-head h1 { flex: 1; font-size: 20px; line-height: 28px; font-weight: 300; color: #333; }
.pane-head button { margin-left: 20px; }
.pane-head button:last-child { margin-right: 4px; }
.pane-tabs { display: flex; gap: 12px; padding: 7px 0 0 3px; }
.pane-tabs button { width: 30px; height: 30px; }
.pane-tabs .sel { background: #c6c6c6; }
.notch { display: block; margin: 7px 0 -1px 10px; position: relative; z-index: 1; }
.rule { height: 1px; background: #c6c6c6; }
.sec { height: 28px; gap: 6px; padding-left: 8px; color: #222; font-weight: 700; font-size: 11px; justify-content: flex-start; }
.rule + .sec { margin-top: 2px; }
.radios { padding: 5px 0 0 22px; color: #a6a6a6; }
.radios label { display: flex; gap: 6px; height: 22px; align-items: center; }
.radios input { appearance: none; width: 12px; height: 12px; border: 1px solid #c6c6c6; border-radius: 50%; background: #f0f0f0; margin-top: -2px; }
.radios span { margin-top: 2px; }

.status { flex: none; height: 22px; display: flex; align-items: center; background: #f3f2f1; border-top: 1px solid #c6c6c6; padding: 0 8px 1px 12px; font-size: 11px; color: #555; }
.acc { margin-left: 30px; gap: 3px; font-weight: 600; }
.views { margin-left: auto; display: flex; gap: 26px; }
.zoom { display: flex; align-items: center; margin-left: 19px; color: #a6a6a6; gap: 4px; }
.zoom span { margin-left: 8px; }
.zoom input { appearance: none; width: 100px; height: 8px; background: linear-gradient(#555, #555) center / 100% 1px no-repeat; }
.zoom input::-webkit-slider-thumb { appearance: none; width: 1px; height: 6px; background: #444; }

.taskbar { flex: none; height: 40px; display: flex; color: #fff; background: linear-gradient(90deg, #46202c 0, #3f161e 29%, #42281f 33%, #45302a 45%, #49281f 58%, #4a201e 69%, #1f1d1d 72.500%, #1d2123 75%, #20353a 81%, #1f4346 100%); }
.start { width: 48px; }
.tsearch { width: 288px; display: flex; align-items: center; gap: 12px; padding-left: 11px; background: #f1f1f1; border: 1px solid #c6c6c6; color: #333; font-size: 14px; }
.tsearch input { flex: 1; min-width: 0; }
.tsearch input::placeholder { color: #333; opacity: 1; }
.apps { display: flex; padding-left: 1px; }
.apps button { width: 49px; }
.apps .run { padding-top: 2px; box-shadow: inset 0 -2px #76b9ed; }
.apps .run:not(.cur) { width: 41px; margin: 0 4px; }
.apps .cur { background: rgba(255,255,255,.22); }
.helpb { margin-left: 118px; }
.weather { margin-left: auto; gap: 11px; font-size: 13px; }
.tray { display: flex; align-items: center; margin-left: 20px; }
.tray button { width: 32px; height: 40px; }
.lang { width: 37px; text-align: center; }
.clock { width: 70px; text-align: center; line-height: 18px; font-size: 11px; }
.tray .note { width: 48px; border-right: 1px solid #6d8284; margin-right: 5px; padding-top: 10px; }
.count { font: 12px "Open Sans", sans-serif; fill: #fff; text-anchor: middle; }

.hover-box { position: absolute; left: 0; top: 12px; width: 45px; height: 90px; border: 2px solid #666; border-left: 0; background: rgba(255,255,255,.3); z-index: 3; }
```
FILE: app.js
```js
const columns = 'ABCDEFGHIJKL'.split('').concat('');
const data = {
  1: ['Price', '$135,000.00'],
  2: ['Interest (annual)', '4%'],
  3: ['Loan term (in months)', '24'],
  4: ['Monthly payment', '$5,862.36'],
  6: ['Total payments', '$140,696.75'],
  7: ['Interest paid', '$5,696.75'],
  9: ['Average sales', '$2,612.50'],
  10: ['Buy new truck?', '']
};
const corner = '<th class="corner"><svg width="12" height="12" viewBox="0 0 12 12"><path d="M12 0v12H0z" fill="#b4b4b4"/></svg></th>';
document.querySelector('thead').innerHTML = '<tr>' + corner + columns.map(c => `<th class="${c === 'B' ? 'sel' : ''}">${c}</th>`).join('') + '</tr>';
let rows = '';
for (let r = 1; r <= 23; r++) {
  rows += `<tr><th class="${r === 10 ? 'sel' : ''}">${r}</th>`;
  columns.forEach((c, i) => {
    const cls = [];
    if (i === 1) cls.push('num');
    if (i < 2 && (r === 5 || r === 7)) cls.push('bb');
    if (i === 1 && (r === 6 || r === 7)) cls.push('br');
    if (i === 1 && r === 10) cls.push('cell-active');
    rows += `<td class="${cls.join(' ')}">${(data[r] && data[r][i]) || ''}</td>`;
  });
  rows += '</tr>';
}
document.querySelector('tbody').innerHTML = rows;
```
